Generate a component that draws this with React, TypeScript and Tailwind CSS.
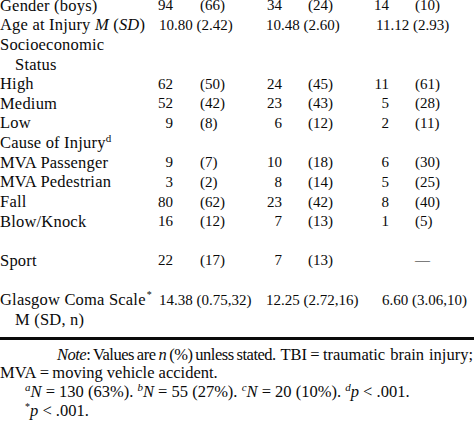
import React from "react";

type Row =
  | { kind: "count"; label: React.ReactNode; indent?: boolean; v: string[] }
  | { kind: "mean"; label: React.ReactNode; indent?: boolean; m: string[] }
  | { kind: "text"; label: React.ReactNode; indent?: boolean }
  | { kind: "blank" };

const ROWS: Row[] = [
  { kind: "count", label: "Gender (boys)", v: ["94", "(66)", "34", "(24)", "14", "(10)"] },
  {
    kind: "mean",
    label: (
      <>
        Age at Injury <i>M</i> (<i>SD</i>)
      </>
    ),
    m: ["10.80 (2.42)", "10.48 (2.60)", "11.12 (2.93)"],
  },
  { kind: "text", label: "Socioeconomic" },
  { kind: "text", label: "Status", indent: true },
  { kind: "count", label: "High", v: ["62", "(50)", "24", "(45)", "11", "(61)"] },
  { kind: "count", label: "Medium", v: ["52", "(42)", "23", "(43)", "5", "(28)"] },
  { kind: "count", label: "Low", v: ["9", "(8)", "6", "(12)", "2", "(11)"] },
  {
    kind: "text",
    label: (
      <>
        Cause of Injury<sup className="text-[11px] top-[-0.6em]">d</sup>
      </>
    ),
  },
  { kind: "count", label: "MVA Passenger", v: ["9", "(7)", "10", "(18)", "6", "(30)"] },
  { kind: "count", label: "MVA Pedestrian", v: ["3", "(2)", "8", "(14)", "5", "(25)"] },
  { kind: "count", label: "Fall", v: ["80", "(62)", "23", "(42)", "8", "(40)"] },
  { kind: "count", label: "Blow/Knock", v: ["16", "(12)", "7", "(13)", "1", "(5)"] },
  { kind: "blank" },
  { kind: "count", label: "Sport", v: ["22", "(17)", "7", "(13)", "", "—"] },
  { kind: "blank" },
];

// numbers are set a touch narrower than the labels in the source
const num = "text-[15px] pt-[0.5px]";

function Cells({ v }: { v: string[] }) {
  return (
    <>
      <div className={num + " text-right pr-[2px]"}>{v[0]}</div>
      <div className={num + " pl-[25px]"}>{v[1]}</div>
      <div className={num + " text-right pr-[2px]"}>{v[2]}</div>
      <div className={num + " pl-[24px]"}>{v[3]}</div>
      <div className={num + " text-right pr-[2px]"}>{v[4]}</div>
      <div className={num + " pl-[24px]"}>{v[5]}</div>
    </>
  );
}

function Means({ m, last = "pl-[10px]" }: { m: string[]; last?: string }) {
  return (
    <>
      <div className={num + " col-span-2 pl-[9px]"}>{m[0]}</div>
      <div className={num + " col-span-2 pl-[8px]"}>{m[1]}</div>
      <div className={num + " col-span-2 " + last}>{m[2]}</div>
    </>
  );
}

const grid =
  "grid grid-cols-[150px_25px_83px_26px_82px_25px_1fr] h-[19.65px] whitespace-nowrap";

const sup = "text-[11px] top-[-0.6em] italic";

export default function App() {
  return (
    <div className="w-[474px] h-[425px] overflow-hidden bg-white text-[#0a0a0a] font-['Liberation_Serif',serif] text-[16.5px] leading-[19.65px]">
      <div className="mt-[-4.4px]">
        {ROWS.map((r, i) => {
          if (r.kind === "blank") return <div key={i} className="h-[19.65px]" />;
          return (
            <div key={i} className={grid}>
              <div className={"tracking-[0.2px] " + (r.indent ? "pl-[15px]" : "")}>{r.label}</div>
              {r.kind === "count" && <Cells v={r.v} />}
              {r.kind === "mean" && <Means m={r.m} />}
            </div>
          );
        })}
        <div className={grid}>
          <div className="tracking-[0.2px]">
            Glasgow Coma Scale<sup className="text-[10px] top-[-0.7em] ml-[1px]">*</sup>
          </div>
          <Means m={["14.38 (0.75,32)", "12.25 (2.72,16)", "6.60 (3.06,10)"]} last="pl-[16px]" />
        </div>
        <div className={grid}>
          <div className="pl-[15px] tracking-[0.2px]">M (SD, n)</div>
        </div>
      </div>

      <div className="mt-[7px] h-[3px] bg-[#0a0a0a]" />

      <div className="mt-[6px] whitespace-nowrap leading-[18.9px]">
        <div className="ml-[57px] w-[416px] text-justify [text-align-last:justify]">
          <span className="tracking-[-0.5px] [word-spacing:-1.5px]">
            <i>Note</i>: Values are <i>n</i> (%) unless stated.
          </span>{" "}
          TBI{"\u2009=\u2009"}traumatic brain injury;
        </div>
        <div>MVA{"\u2009=\u2009"}moving vehicle accident.</div>
        <div className="pl-[25px]">
          <sup className={sup}>a</sup>
          <i>N</i> = 130 (63%). <sup className={sup}>b</sup>
          <i>N</i> = 55 (27%). <sup className={sup}>c</sup>
          <i>N</i> = 20 (10%). <sup className={sup}>d</sup>
          <i>p</i> &lt; .001.
        </div>
        <div className="pl-[25px]">
          <sup className="text-[10px] top-[-0.6em]">*</sup>
          <i>p</i> &lt; .001.
        </div>
      </div>
    </div>
  );
}
